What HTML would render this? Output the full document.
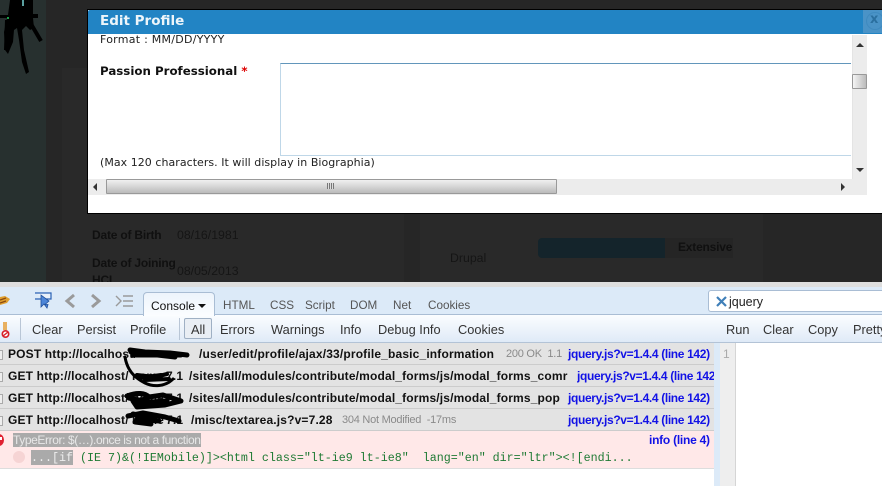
<!DOCTYPE html>
<html><head><meta charset="utf-8"><style>
html,body{margin:0;padding:0}
body{width:882px;height:486px;position:relative;overflow:hidden;background:#fff;font-family:"Liberation Sans",sans-serif}
div,span.a{position:absolute;white-space:nowrap}
.v{font-family:"DejaVu Sans",sans-serif}
.t{font-size:12.8px;color:#333;line-height:16px;top:322px}
.tab{font-size:11.7px;color:#555;line-height:16px;top:298px}
.r{left:0;width:714px;height:21px;background:#e3e3e3;border-bottom:1px solid #ccc}
.u{font-size:12px;font-weight:bold;color:#111;line-height:16px;letter-spacing:.16px}
.l{font-size:12px;font-weight:bold;color:#1212e6;line-height:16px;letter-spacing:-.35px}
.g{font-size:11px;color:#8a8a8a;line-height:16px;letter-spacing:-.25px}
.cb{left:0;width:2px;height:8px;border:1px solid #aaa;border-left:0;background:#eee}
.d{color:#101010;font-size:12.3px;line-height:16px}
.b{font-size:12px;font-weight:bold;letter-spacing:-.2px}
</style></head><body>
<!-- dark page -->
<div style="left:0;top:0;width:882px;height:282px;background:#262626"></div>
<div style="left:0;top:0;width:46px;height:282px;background:#27302f"></div>
<div style="left:62px;top:68px;width:342px;height:214px;background:#292929"></div>
<div style="left:420px;top:213px;width:343px;height:69px;background:#292929"></div>
<div class="d b" style="left:92px;top:227px">Date of Birth</div>
<div class="d" style="left:177px;top:227px;color:#151515">08/16/1981</div>
<div class="d b" style="left:92px;top:255px">Date of Joining</div>
<div class="d b" style="left:92px;top:272px">HCL</div>
<div class="d" style="left:177px;top:263px;color:#151515">08/05/2013</div>
<div class="d" style="left:450px;top:250px;color:#151515">Drupal</div>
<div style="left:538px;top:238px;width:127px;height:20px;background:#14242b;border-radius:4px 0 0 4px"></div>
<div style="left:665px;top:238px;width:68px;height:20px;background:#252525"></div>
<div class="d b" style="left:678px;top:239px">Extensive</div>
<svg style="position:absolute;left:0;top:0" width="60" height="80"><path d="M10 0H33V14H38V18H33L34 28L30 30L26 26L22 30L24 50L29 72L26 74L22 62L19 40L17 28L14 30L13 42L8 54L5 50L4 32L7 18H0V15H8Z" fill="#000"/><path d="M31 24L41 41" stroke="#000" stroke-width="4" fill="none"/><path d="M6 20L5 50" stroke="#000" stroke-width="2" fill="none"/></svg>
<div style="left:22px;top:0;width:2px;height:6px;background:#5a9f9f"></div>
<div style="left:7px;top:17px;width:2px;height:2px;background:#1a9f4a"></div>
<!-- modal -->
<div style="left:87px;top:9px;width:800px;height:205px;background:#fff;border:1px solid #000;border-width:1px 0 1px 1px;box-sizing:border-box"></div>
<div style="left:88px;top:10px;width:794px;height:24px;background:#2284c4;border-radius:2px 0 0 0"></div>
<div class="v" style="left:100px;top:12px;font-size:13.5px;font-weight:bold;color:#edf5fa;line-height:18px">Edit Profile</div>
<div style="left:863px;top:10px;width:19px;height:23px;background:#4a93c7"></div>
<div style="left:866px;top:12px;width:18px;height:18px;border-radius:50%;border:1px solid #3f8abf;box-sizing:border-box"></div>
<div style="left:870px;top:11px;font:bold 13px 'DejaVu Sans',sans-serif;color:#2a6f9f;line-height:18px">x</div>
<div class="v" style="left:100px;top:33px;font-size:11px;color:#222;line-height:14px;letter-spacing:.26px">Format : MM/DD/YYYY</div>
<div class="v" style="left:100px;top:63px;font-size:11.8px;font-weight:bold;color:#111;line-height:16px">Passion Professional <span style="color:#d00">*</span></div>
<div style="left:280px;top:63px;width:571px;height:93px;box-sizing:border-box;border:1px solid #bfd7e8;border-top-color:#6296bb;border-right:0;background:#fff"></div>
<div class="v" style="left:100px;top:156px;font-size:11px;color:#222;line-height:14px;letter-spacing:.04px">(Max 120 characters. It will display in Biographia)</div>
<!-- v scrollbar -->
<div style="left:852px;top:35px;width:15px;height:144px;background:#ececec;border-left:1px solid #e4e4e4;box-sizing:border-box"></div>
<div style="left:856px;top:43px;width:0;height:0;border:4px solid transparent;border-top:0;border-bottom:4px solid #333"></div>
<div style="left:856px;top:168px;width:0;height:0;border:4px solid transparent;border-bottom:0;border-top:4px solid #333"></div>
<div style="left:852px;top:74px;width:15px;height:15px;box-sizing:border-box;border:1px solid #999;border-radius:1px;background:linear-gradient(90deg,#f4f4f4,#bbb)"></div>
<!-- h scrollbar -->
<div style="left:88px;top:179px;width:779px;height:16px;background:#ececec"></div>
<div style="left:93px;top:183px;width:0;height:0;border:4px solid transparent;border-left:0;border-right:4px solid #333"></div>
<div style="left:841px;top:183px;width:0;height:0;border:4px solid transparent;border-right:0;border-left:4px solid #333"></div>
<div style="left:106px;top:179px;width:451px;height:15px;box-sizing:border-box;border:1px solid #999;border-radius:1px;background:linear-gradient(#f0f0f0,#bbb)"></div>
<div style="left:327px;top:183px;width:7px;height:6px;background:repeating-linear-gradient(90deg,#777 0 1px,#ddd 1px 2px)"></div>
<!-- firebug -->
<div style="left:0;top:282px;width:882px;height:5px;background:#dedede"></div>
<div style="left:0;top:287px;width:882px;height:28px;background:#dceaf8;border-bottom:1px solid #a9bdd4;box-sizing:border-box"></div>
<div style="left:0;top:315px;width:882px;height:28px;background:linear-gradient(#fbfdff,#dfeaf7);border-bottom:1px solid #b3c3d6;box-sizing:border-box"></div>
<svg style="position:absolute;left:0;top:296px" width="12" height="11"><path d="M0 1L5 0L10 3L7 7L0 9Z" fill="#e0a030"/><path d="M0 4L6 2M0 7L6 5" stroke="#8a4a10" stroke-width="1.2"/></svg>
<svg style="position:absolute;left:34px;top:292px" width="18" height="18"><path d="M1 1H17V7H11M8 7H1Z" fill="#e8f0fa" stroke="#2a62b5" stroke-width="1.2"/><path d="M7 3L7 15L10 12L13 16L14 12.5H11L15 9Z" fill="#4d86d8" stroke="#1f4f9c" stroke-width=".8"/></svg>
<svg style="position:absolute;left:64px;top:293px" width="70" height="16"><g fill="none" stroke="#9a9a9a" stroke-width="3"><path d="M10 2L3 8L10 14M28 2L35 8L28 14"/></g><g fill="none" stroke="#9a9a9a" stroke-width="1.4"><path d="M52 3L57 8L52 13M59 3H69M59 8H69M59 13H69"/></g></svg>
<div style="left:143px;top:292px;width:72px;height:24px;box-sizing:border-box;background:linear-gradient(#edf4fc,#fbfdff);border:1px solid #a9bdd4;border-bottom:0;border-radius:4px 4px 0 0"></div>
<div style="left:151px;top:298px;font-size:12px;color:#111;line-height:16px">Console</div>
<div style="left:198px;top:304px;width:0;height:0;border:4px solid transparent;border-bottom:0;border-top:4px solid #111"></div>
<div class="tab" style="left:223px">HTML</div>
<div class="tab" style="left:270px">CSS</div>
<div class="tab" style="left:305px">Script</div>
<div class="tab" style="left:350px">DOM</div>
<div class="tab" style="left:393px">Net</div>
<div class="tab" style="left:428px">Cookies</div>
<div style="left:708px;top:290px;width:180px;height:22px;box-sizing:border-box;background:#fff;border:1px solid #a9bdd4;border-radius:3px"></div>
<svg style="position:absolute;left:716px;top:296px" width="11" height="11"><path d="M1 1L10 10M10 1L1 10" stroke="#3f7fb8" stroke-width="2.2"/></svg>
<div style="left:729px;top:294px;font-size:12.5px;color:#222;line-height:16px">jquery</div>
<svg style="position:absolute;left:0;top:322px" width="12" height="18"><rect x="3" y="0" width="4" height="8" fill="#e8b060"/><circle cx="5.5" cy="12" r="3.2" fill="#fff" stroke="#d8202a" stroke-width="1.6"/><path d="M3 14L8 10" stroke="#d8202a" stroke-width="1.4"/></svg>
<div style="left:20px;top:318px;width:1px;height:22px;background:#b9c6d6"></div>
<div class="t" style="left:32px">Clear</div>
<div class="t" style="left:77px">Persist</div>
<div class="t" style="left:130px">Profile</div>
<div style="left:179px;top:318px;width:1px;height:22px;background:#b9c6d6"></div>
<div style="left:184px;top:318px;width:28px;height:21px;box-sizing:border-box;background:#e9eef4;border:1px solid #9fb0c4;border-radius:2px"></div>
<div class="t" style="left:191px">All</div>
<div class="t" style="left:220px">Errors</div>
<div class="t" style="left:271px">Warnings</div>
<div class="t" style="left:340px">Info</div>
<div class="t" style="left:378px">Debug Info</div>
<div class="t" style="left:458px">Cookies</div>
<div class="t" style="left:726px">Run</div>
<div class="t" style="left:763px">Clear</div>
<div class="t" style="left:808px">Copy</div>
<div class="t" style="left:853px">Pretty</div>
<!-- rows -->
<div class="r" style="top:343px"></div>
<div class="r" style="top:365px"></div>
<div class="r" style="top:387px"></div>
<div class="r" style="top:409px"></div>
<div class="cb" style="top:350px"></div><div class="cb" style="top:372px"></div><div class="cb" style="top:394px"></div><div class="cb" style="top:416px"></div>
<div class="u" style="left:8px;top:346px">POST http://localhost/</div>
<div class="u" style="left:199px;top:346px">/user/edit/profile/ajax/33/profile_basic_information</div>
<div class="g" style="left:506px;top:346px">200 OK&nbsp; 1.1</div>
<div class="l" style="left:568px;top:346px">jquery.js?v=1.4.4 (line 142)</div>
<div class="u" style="left:8px;top:368px">GET http://localhost/</div>
<div class="u" style="left:132px;top:368px">name</div>
<div class="u" style="left:166px;top:368px">7.1</div>
<div class="u" style="left:189px;top:368px;width:380px;overflow:hidden">/sites/all/modules/contribute/modal_forms/js/modal_forms_comr</div>
<div class="l" style="left:577px;top:368px;width:137px;overflow:hidden">jquery.js?v=1.4.4 (line 142)</div>
<div class="u" style="left:8px;top:390px">GET http://localhost/</div>
<div class="u" style="left:132px;top:390px">name</div>
<div class="u" style="left:166px;top:390px">7.1</div>
<div class="u" style="left:189px;top:390px;width:371px;overflow:hidden">/sites/all/modules/contribute/modal_forms/js/modal_forms_pop</div>
<div class="l" style="left:568px;top:390px">jquery.js?v=1.4.4 (line 142)</div>
<div class="u" style="left:8px;top:412px">GET http://localhost/</div>
<div class="u" style="left:132px;top:412px">name</div>
<div class="u" style="left:166px;top:412px">7.1</div>
<div class="u" style="left:191px;top:412px">/misc/textarea.js?v=7.28</div>
<div class="g" style="left:342px;top:412px">304 Not Modified&nbsp; -17ms</div>
<div class="l" style="left:568px;top:412px">jquery.js?v=1.4.4 (line 142)</div>
<!-- scribbles (page offset 115,343) -->
<svg style="position:absolute;left:115px;top:343px" width="90" height="90"><g fill="none" stroke="#000" stroke-linecap="round" stroke-linejoin="round">
<path d="M15 7L30 9L55 10L72 12M18 12L66 12M16 9L60 14" stroke-width="5"/>
<path d="M10 14C12 26 18 34 30 40C38 44 50 44 58 36" stroke-width="3"/>
<path d="M22 32L40 34L52 31M30 37L54 36M24 35L46 32" stroke-width="4"/>
<path d="M12 53C22 49 30 50 34 54L48 52L66 58L50 62L22 64L18 58L32 56M20 60L52 58M14 55L36 60" stroke-width="5"/>
<path d="M13 73L28 70L50 74L64 78M22 76L44 78M18 71L40 76M20 79L36 81" stroke-width="5"/>
</g></svg>
<!-- error -->
<div style="left:0;top:431px;width:714px;height:38px;background:#ffe8e8;border-bottom:1px solid #ddd;box-sizing:border-box"></div>
<div style="left:-6px;top:434px;width:10px;height:12px;background:#e02030;border-radius:50%"></div>
<div style="left:0;top:437px;width:2px;height:3px;background:#fff"></div>
<div style="left:13px;top:433px;width:188px;height:14px;background:#aaa"></div>
<div style="left:13px;top:432px;font-size:12px;letter-spacing:-.4px;color:#e8e8e8;line-height:16px">TypeError: $(…).once is not a function</div>
<div class="l" style="left:649px;top:432px;letter-spacing:-.25px">info (line 4)</div>
<div style="left:13px;top:451px;width:12px;height:12px;background:#f6d4d4;border-radius:50%"></div>
<div style="left:31px;top:450px;width:42px;height:15px;background:#aaa"></div>
<div style="left:31px;top:451px;font:11.67px/14px 'Liberation Mono',monospace;color:#1f7a34;white-space:pre"><span style="color:#eee">...[if</span> (IE 7)&amp;(!IEMobile)]&gt;&lt;html class="lt-ie9 lt-ie8"  lang="en" dir="ltr"&gt;&lt;![endi...</div>
<!-- right -->
<div style="left:714px;top:343px;width:6px;height:143px;background:#dceaf8"></div>
<div style="left:720px;top:343px;width:15px;height:143px;background:#eee;border-right:1px solid #d5d5d5"></div>
<div style="left:723px;top:346px;font-size:12px;color:#aaa;line-height:16px">1</div>
</body></html>
